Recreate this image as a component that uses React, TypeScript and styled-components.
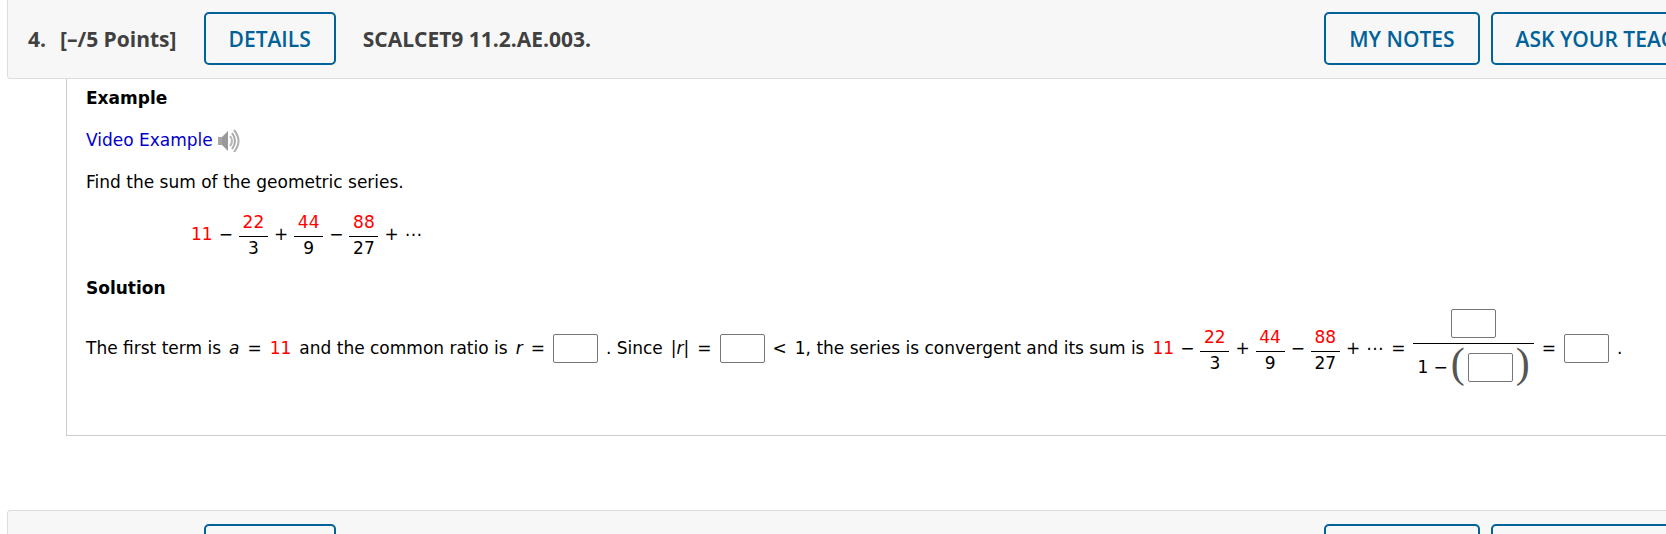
import React from "react";
import styled, { createGlobalStyle } from "styled-components";

const GlobalStyle = createGlobalStyle`
  * { box-sizing: border-box; }
  body {
    margin: 0;
    background: #fff;
    color: #000;
    font-family: Verdana, "DejaVu Sans", sans-serif;
    font-size: 17px;
    line-height: 24px;
  }
`;

const Page = styled.main`
  height: 100vh;
  overflow: hidden;
  padding-left: 7px;
`;

const Question = styled.section<{ $first?: boolean }>`
  margin-top: ${(p) => (p.$first ? "-2px" : "74px")};
  margin-right: -95px;
`;

const Header = styled.header`
  display: flex;
  align-items: center;
  padding: 13px 20px;
  background: #f7f7f7;
  border: 1px solid #ddd;
  border-radius: 3px;
  color: #404040;
  font-family: "Open Sans", sans-serif;
  font-size: 21px;
  font-weight: 700;
  line-height: 30px;
  white-space: nowrap;
`;

const Points = styled.span`
  margin: 0 27px 0 14px;
`;

const Code = styled.span`
  margin-left: 27px;
`;

const Actions = styled.div`
  display: flex;
  gap: 11px;
  margin-left: auto;
`;

const Button = styled.button`
  height: 53px;
  padding: 0 23px;
  border: 2px solid #006298;
  border-radius: 5px;
  background: transparent;
  color: #006298;
  font-family: inherit;
  font-size: 21px;
  font-weight: 600;
  line-height: 30px;
`;

const Body = styled.div`
  margin-left: 59px;
  padding: 7px 19px 48px;
  border: 1px solid #ccc;
  border-top: 0;
`;

const Heading = styled.h3`
  margin: 0;
  font-size: 17px;
  line-height: 24px;
`;

const SolutionHeading = styled(Heading)`
  margin-top: 18px;
`;

const Paragraph = styled.p`
  margin: 18px 0 0;
`;

const VideoLink = styled.a`
  display: inline-flex;
  align-items: center;
  gap: 4px;
  color: #0000ce;
  text-decoration: none;
`;

const Series = styled.div`
  display: flex;
  align-items: center;
  gap: 6px;
  white-space: nowrap;
`;

const DisplayedSeries = styled.div`
  margin-top: 15px;
  padding-left: 105px;
`;

const SolutionRow = styled.div`
  display: flex;
  align-items: center;
  gap: 8px;
  margin-top: 9px;
  white-space: nowrap;
`;

const Red = styled.span`
  color: #f00;
`;

const Fraction = styled.span`
  display: flex;
  flex-direction: column;
  min-width: 29px;
  line-height: 20px;
  text-align: center;
`;

const Numerator = styled.span`
  padding: 3px 0 4px;
  border-bottom: 1px solid #000;
  color: #f00;
`;

const Denominator = styled.span`
  padding-top: 1px;
`;

const AnswerNumerator = styled.span`
  display: flex;
  justify-content: center;
  padding-bottom: 5px;
  border-bottom: 1px solid #000;
`;

const AnswerDenominator = styled.span`
  display: flex;
  align-items: center;
  gap: 3px;
  padding: 3px 4px 0;
`;

const Paren = styled.span`
  padding-bottom: 8px;
  color: #555;
  font-family: "Liberation Serif", serif;
  font-size: 42px;
  line-height: 32px;
`;

const Answer = styled.input`
  width: 45px;
  height: 29px;
  margin: 0;
  padding: 2px 4px;
  border: 1px solid #767676;
  border-radius: 2px;
  background: #fff;
  font: inherit;
`;

const SpeakerIcon = () => (
  <svg width="24" height="24" viewBox="0 0 24 24" aria-hidden="true">
    <path d="M1 9h4v8H1z" fill="#a6a6a6" />
    <path d="M5 9l6-6v20l-6-6z" fill="#999" />
    <path d="M13 8q4 5 0 10" fill="none" stroke="#b5b5b5" strokeWidth="2" />
    <path d="M15 5q6 8 0 16" fill="none" stroke="#aaa" strokeWidth="2" />
    <path d="M17 2q9 11 0 22" fill="none" stroke="#b0b0b0" strokeWidth="2" />
  </svg>
);

const terms = [
  { sign: "−", top: "22", bottom: "3" },
  { sign: "+", top: "44", bottom: "9" },
  { sign: "−", top: "88", bottom: "27" },
];

const GeometricSeries = () => (
  <Series>
    <Red>11</Red>
    {terms.map((t) => (
      <React.Fragment key={t.top}>
        <span>{t.sign}</span>
        <Fraction>
          <Numerator>{t.top}</Numerator>
          <Denominator>{t.bottom}</Denominator>
        </Fraction>
      </React.Fragment>
    ))}
    <span>+</span>
    <span>⋯</span>
  </Series>
);

const QuestionHeader = ({ number, code }: { number: number; code: string }) => (
  <Header>
    <span>{number}.</span>
    <Points>[–/5 Points]</Points>
    <Button type="button">DETAILS</Button>
    <Code>{code}</Code>
    <Actions>
      <Button type="button">MY NOTES</Button>
      <Button type="button">ASK YOUR TEACHER</Button>
    </Actions>
  </Header>
);

export default function App() {
  return (
    <Page>
      <GlobalStyle />
      <Question $first>
        <QuestionHeader number={4} code="SCALCET9 11.2.AE.003." />
        <Body>
          <Heading>Example</Heading>
          <Paragraph>
            <VideoLink href="#video">
              Video Example
              <SpeakerIcon />
            </VideoLink>
          </Paragraph>
          <Paragraph>Find the sum of the geometric series.</Paragraph>
          <DisplayedSeries>
            <GeometricSeries />
          </DisplayedSeries>
          <SolutionHeading>Solution</SolutionHeading>
          <SolutionRow>
            <span>The first term is</span>
            <i>a</i>
            <span>=</span>
            <Red>11</Red>
            <span>and the common ratio is</span>
            <i>r</i>
            <span>=</span>
            <Answer aria-label="Common ratio" />
            <span>. Since</span>
            <span>
              |<i>r</i>|
            </span>
            <span>=</span>
            <Answer aria-label="Absolute value of the ratio" />
            <span>&lt;</span>
            <span>1, the series is convergent and its sum is</span>
            <GeometricSeries />
            <span>=</span>
            <Fraction>
              <AnswerNumerator>
                <Answer aria-label="Numerator of the sum" />
              </AnswerNumerator>
              <AnswerDenominator>
                <span>1 −</span>
                <Paren>(</Paren>
                <Answer aria-label="Ratio in the denominator" />
                <Paren>)</Paren>
              </AnswerDenominator>
            </Fraction>
            <span>=</span>
            <Answer aria-label="Sum" />
            <span>.</span>
          </SolutionRow>
        </Body>
      </Question>
      <Question>
        <QuestionHeader number={5} code="SCALCET9 11.2.AE.004." />
      </Question>
    </Page>
  );
}
